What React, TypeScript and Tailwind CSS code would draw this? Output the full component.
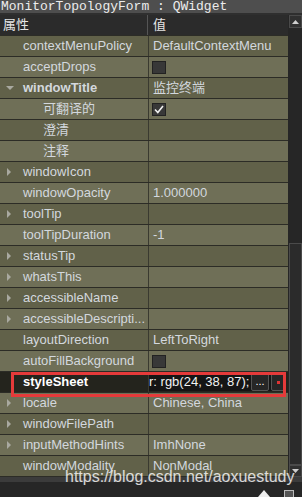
import React from "react";

type Row = {
  name: string;
  value?: string;
  arrow?: "right" | "down";
  child?: boolean;
  bold?: boolean;
  check?: "on" | "off";
  selected?: boolean;
};

const rows: Row[] = [
  { name: "contextMenuPolicy", value: "DefaultContextMenu" },
  { name: "acceptDrops", check: "off" },
  { name: "windowTitle", arrow: "down", bold: true, value: "监控终端" },
  { name: "可翻译的", child: true, check: "on" },
  { name: "澄清", child: true },
  { name: "注释", child: true },
  { name: "windowIcon", arrow: "right" },
  { name: "windowOpacity", value: "1.000000" },
  { name: "toolTip", arrow: "right" },
  { name: "toolTipDuration", value: "-1" },
  { name: "statusTip", arrow: "right" },
  { name: "whatsThis", arrow: "right" },
  { name: "accessibleName", arrow: "right" },
  { name: "accessibleDescripti...", arrow: "right" },
  { name: "layoutDirection", value: "LeftToRight" },
  { name: "autoFillBackground", check: "off" },
  { name: "styleSheet", selected: true, bold: true },
  { name: "locale", arrow: "right", value: "Chinese, China" },
  { name: "windowFilePath", arrow: "right" },
  { name: "inputMethodHints", arrow: "right", value: "ImhNone" },
  { name: "windowModality", value: "NonModal" },
];

const font = {
  fontFamily: '"Liberation Sans", "Noto Sans CJK SC", sans-serif',
};

function Arrow({ dir }: { dir: "right" | "down" }) {
  if (dir === "right")
    return (
      <svg width="5" height="8" viewBox="0 0 5 8" className="absolute left-[7px] top-[6px]">
        <path d="M0 0 L4 4 L0 8 Z" fill="#a9a9a0" />
      </svg>
    );
  return (
    <svg width="8" height="5" viewBox="0 0 8 5" className="absolute left-[6px] top-[8px]">
      <path d="M0 0 L8 0 L4 4 Z" fill="#a9a9a0" />
    </svg>
  );
}

function Check({ on }: { on: boolean }) {
  return (
    <div className="w-[14px] h-[13px] bg-[#383838] border border-[#222] flex items-center justify-center">
      {on && (
        <svg width="10" height="9" viewBox="0 0 10 9">
          <path d="M1 4.5 L3.8 7.5 L9 1" stroke="#f0f0f0" strokeWidth="1.6" fill="none" />
        </svg>
      )}
    </div>
  );
}

export default function App() {
  return (
    <div
      className="relative w-[302px] h-[497px] overflow-hidden bg-[#282828] text-[13px] text-[#d3d8de]"
      style={font}
    >
      {/* title bar */}
      <div
        className="h-[13px] bg-[#4e4e4e] text-[#ececec] text-[13px] leading-[13px] pl-[1px] whitespace-nowrap overflow-hidden"
        style={{ fontFamily: '"Liberation Mono", monospace' }}
      >
        MonitorTopologyForm : QWidget
      </div>
      <div className="h-[2px] bg-[#2f2f2f]" />

      <div className="flex">
        {/* table */}
        <div className="w-[288px]">
          <div className="h-[20px] flex bg-[#2b2b2b] text-[#e6e6e6]">
            <div className="w-[148px] pl-[3px] leading-[20px] border-r border-[#555]">属性</div>
            <div className="flex-1 pl-[5px] leading-[20px]">值</div>
          </div>
          {rows.map((r, i) => {
            const bg = r.selected
              ? "bg-[#24241d]"
              : i % 2 === 0
              ? "bg-[#616149]"
              : "bg-[#6f6f57]";
            return (
              <div key={i} className={`h-[21px] flex border-t border-[#2c2c26] ${bg}`}>
                <div
                  className={`relative w-[149px] h-[20px] leading-[20px] whitespace-nowrap overflow-hidden border-r border-[#3a3a30] ${
                    r.child ? "pl-[43px]" : "pl-[23px]"
                  } ${r.bold ? "font-bold" : ""} ${r.selected ? "text-white" : ""}`}
                >
                  {r.arrow && <Arrow dir={r.arrow} />}
                  {r.name}
                </div>
                <div className="flex-1 h-[20px] leading-[20px] pl-[3px] flex items-center whitespace-nowrap overflow-hidden">
                  {r.check && <Check on={r.check === "on"} />}
                  {r.value && <span className="pl-[1px]">{r.value}</span>}
                  {r.selected && (
                    <div className="flex items-center w-full h-[18px] -ml-[3px] bg-[#151515]">
                      <span className="flex-1 text-[#f2f2f2] overflow-hidden">r: rgb(24, 38, 87);</span>
                      <div className="w-[18px] h-[18px] border border-[#555] bg-[#262626] rounded-[2px] text-[11px] leading-[14px] text-center text-white">
                        ...
                      </div>
                      <div className="w-[14px] h-[18px] ml-[2px] border border-[#555] bg-[#262626] rounded-[2px] flex items-center justify-center">
                        <div className="w-[3px] h-[3px] bg-[#d33]" />
                      </div>
                    </div>
                  )}
                </div>
              </div>
            );
          })}
          <div className="h-[1px] bg-[#2c2c26]" />
        </div>

        {/* scrollbar */}
        <div className="w-[14px] h-[462px] bg-[#262626] flex flex-col items-center">
          <div className="w-[13px] h-[13px] mt-0 border border-[#4a4a4a] bg-[#303030] flex items-center justify-center">
            <svg width="7" height="4" viewBox="0 0 7 4">
              <path d="M0 4 L3.5 0 L7 4 Z" fill="#cfcfcf" />
            </svg>
          </div>
          <div className="flex-1" />
          <div className="w-[13px] h-[222px] border border-[#4a4a4a] bg-[#2b2b2b]" />
          <div className="w-[13px] h-[12px] border border-[#4a4a4a] bg-[#303030] flex items-center justify-center">
            <svg width="7" height="4" viewBox="0 0 7 4">
              <path d="M0 0 L7 0 L3.5 4 Z" fill="#cfcfcf" />
            </svg>
          </div>
        </div>
      </div>

      {/* bottom area */}
      <div className="h-[5px] bg-[#3b3b3b]" />
      <div className="relative h-[15px] bg-[#262626]">
        <svg width="12" height="7" viewBox="0 0 12 7" className="absolute left-[258px] top-[8px]">
          <path d="M0 7 L6 0 L12 7 Z" fill="#eeeeee" />
        </svg>
        <div className="absolute left-[284px] top-[8px] w-[10px] h-[10px] border border-[#bbb] bg-[#555]" />
      </div>

      {/* red annotation box */}
      <div className="absolute left-[11px] top-[372px] w-[275px] h-[25px] border-[3px] border-[#e53a3a]" />

      {/* watermark */}
      <div
        className="absolute left-[65px] top-[468px] text-[16px] leading-[18px] text-white/80 whitespace-nowrap"
        style={{ fontFamily: '"Liberation Sans", sans-serif' }}
      >
        https://blog.csdn.net/aoxuestudy
      </div>
    </div>
  );
}
